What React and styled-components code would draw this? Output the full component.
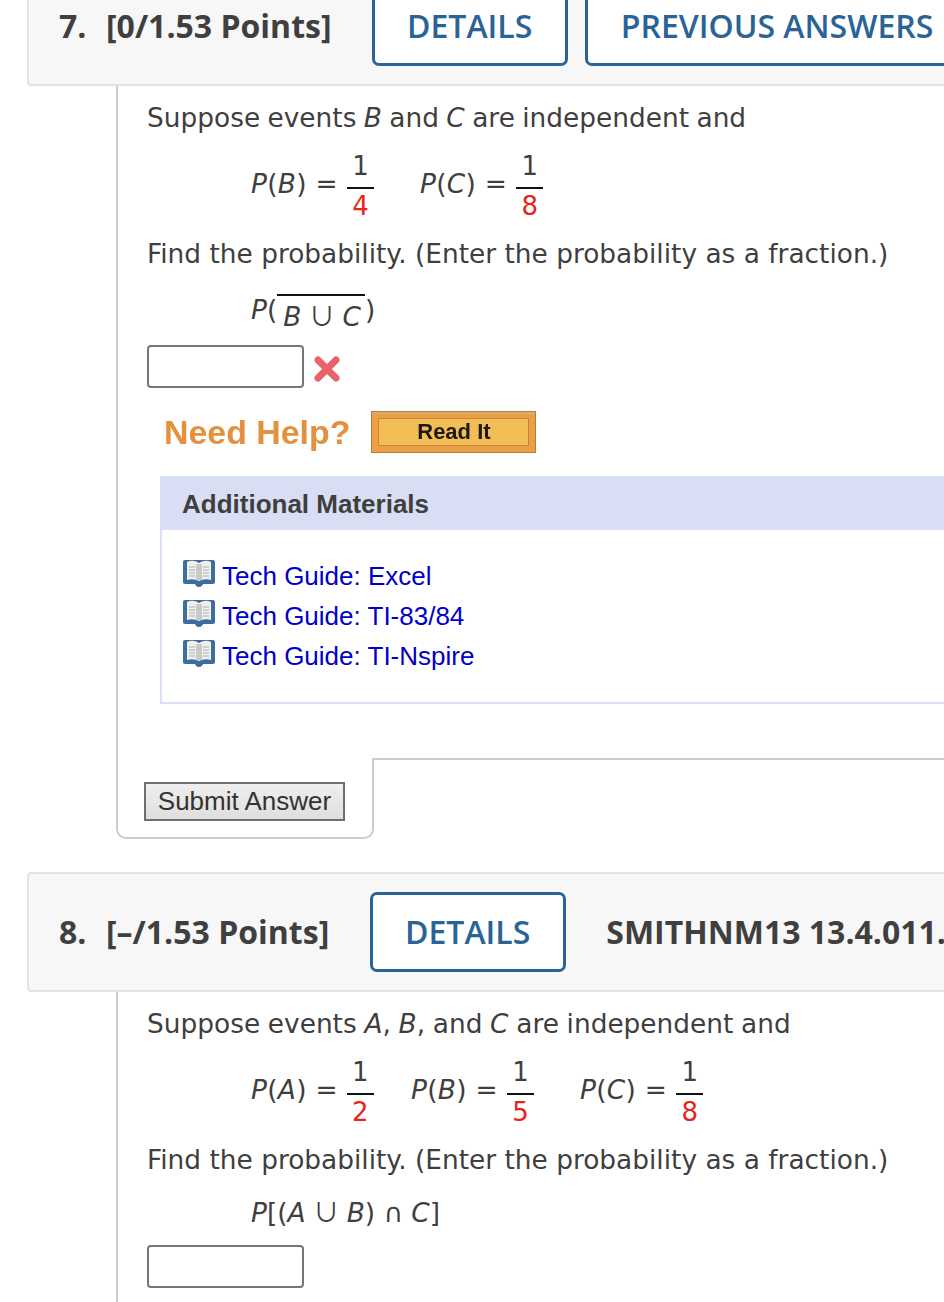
import styled, { createGlobalStyle } from 'styled-components';

const GlobalStyle = createGlobalStyle`
  html, body {
    margin: 0;
    padding: 0;
    background: #fff;
    overflow: hidden;
  }
`;

const Viewport = styled.div`
  width: 944px;
  height: 1302px;
  overflow: hidden;
`;

const Page = styled.div`
  width: 1100px;
  margin-top: -34px;
  padding-left: 27px;
  display: flex;
  flex-direction: column;
  gap: 33px;
  color: #3f3f3f;
  font-family: "DejaVu Sans", Verdana, sans-serif;
`;

const Header = styled.div`
  height: 120px;
  box-sizing: border-box;
  background: #f7f7f7;
  border: 2px solid #e3e3e3;
  border-radius: 4px;
  display: flex;
  align-items: center;
  padding-left: 30px;
  white-space: nowrap;
  font-family: "Open Sans", sans-serif;
`;

const Num = styled.span`
  width: 47px;
  margin-bottom: 2px;
  font-size: 32px;
  font-weight: 700;
`;

const Points = styled.span`
  width: ${p => p.$width}px;
  margin-bottom: 2px;
  font-size: 32px;
  font-weight: 700;
`;

const TabButton = styled.button`
  height: 80px;
  box-sizing: border-box;
  margin-right: ${p => p.$gap || 0}px;
  padding: 0 32.5px 2px;
  background: #fff;
  border: 3px solid #2a6496;
  border-radius: 7px;
  color: #2a6496;
  font: 600 32px "Open Sans", sans-serif;
`;

const Code = styled.span`
  margin-bottom: 2px;
  font-size: 32px;
  font-weight: 700;
`;

const Body = styled.div`
  margin-left: 89px;
  border-left: 2px solid #ccc;
  padding: 12px 0 ${p => p.$bottom}px 29px;
`;

const Para = styled.div`
  font-size: 26.4px;
  line-height: 40px;
  height: 40px;
  word-spacing: ${p => p.$tight || 0}px;
`;

const Var = styled.i`
  font-style: italic;
`;

const MathRow = styled.div`
  height: 70px;
  margin: 10px 0 16px 104px;
  display: flex;
  align-items: center;
  font-size: 26.4px;
  white-space: nowrap;
`;

const MathItem = styled.span`
  display: flex;
  align-items: center;
  width: ${p => p.$width}px;
  letter-spacing: 0.3px;
`;

const Frac = styled.span`
  display: inline-flex;
  flex-direction: column;
  align-items: center;
  width: 27px;
  margin: 2px 0 0 9px;
  font-size: 26px;
  line-height: 30px;
  letter-spacing: 0;
`;

const FracTop = styled.span`
  width: 100%;
  text-align: center;
  border-bottom: 2px solid #111;
  height: 36px;
`;

const FracBottom = styled.span`
  color: #e8251c;
  height: 28px;
  line-height: 34px;
`;

const Expr = styled.div`
  font-size: 26.4px;
  line-height: 40px;
  height: 40px;
  margin: ${p => p.$mt}px 0 0 104px;
  white-space: nowrap;
`;

const Over = styled.span`
  display: inline-block;
  border-top: 2px solid #111;
  line-height: 32px;
  padding: 5px 4px 0 6px;
  transform: translateY(7px);
`;

const Union = styled.span`
  font-family: "Noto Sans CJK JP", sans-serif;
  margin: 0 -1px;
  line-height: 0;
`;

const AnswerRow = styled.div`
  display: flex;
  align-items: center;
  margin-top: ${p => p.$mt}px;
  gap: 9px;
`;

const Field = styled.input`
  width: 157px;
  height: 43px;
  box-sizing: border-box;
  border: 2px solid #767676;
  border-radius: 4px;
  background: #fff;
  margin: 0;
`;

const Cross = styled.svg`
  margin-top: 5px;
  filter: blur(0.5px);
`;

const HelpRow = styled.div`
  display: flex;
  align-items: center;
  margin: 23px 0 0 17px;
  gap: 21px;
  filter: blur(0.4px);
`;

const HelpLabel = styled.span`
  font: 700 33.9px "Liberation Sans", Arial, sans-serif;
  color: #e4913f;
`;

const ReadIt = styled.div`
  width: 165px;
  height: 42px;
  box-sizing: border-box;
  padding: 6px;
  background: #ec9f45;
  border: 1px solid #b97c35;
  box-shadow: inset 0 2px 0 #d5ad7a;
  display: flex;
`;

const ReadItInner = styled.span`
  flex: 1;
  display: flex;
  align-items: center;
  justify-content: center;
  background: #f2bc57;
  border: 1px solid #c08a3c;
  font: 700 22px "Liberation Sans", Arial, sans-serif;
  color: #1d1a12;
`;

const Materials = styled.div`
  margin: 23px 0 0 13px;
  border: 2px solid #d8def3;
  border-top: 0;
  height: 228px;
  box-sizing: border-box;
`;

const MaterialsTitle = styled.div`
  height: 54px;
  margin: 0 0 0 -2px;
  padding-left: 22px;
  background: #d8def3;
  font: 700 26px/56px "Liberation Sans", Arial, sans-serif;
  color: #3f3f3f;
`;

const MaterialsList = styled.div`
  padding: 26px 0 0 21px;
  display: flex;
  flex-direction: column;
`;

const MaterialLink = styled.a`
  height: 40px;
  display: flex;
  align-items: center;
  gap: 7px;
  font: 400 26px "Liberation Sans", Arial, sans-serif;
  color: #0000c8;
`;

const Book = styled.svg`
  margin-bottom: 6px;
  filter: blur(0.4px);
`;

const Footer = styled.div`
  display: flex;
  margin-left: 89px;
`;

const SubmitTab = styled.div`
  width: 258px;
  height: 81px;
  box-sizing: border-box;
  border: 2px solid #ccc;
  border-top: 0;
  border-radius: 0 0 10px 10px;
  padding: 24px 0 0 26px;
`;

const FooterRest = styled.div`
  flex: 1;
  margin-left: -2px;
  border-top: 2px solid #ccc;
`;

const SubmitButton = styled.button`
  width: 201px;
  height: 39px;
  box-sizing: border-box;
  padding: 0;
  background: linear-gradient(#efefef, #dedede);
  border: 2px solid #6f6f6f;
  font: 400 26px "Liberation Sans", Arial, sans-serif;
  color: #333;
`;

const BookIcon = () => (
  <Book width="32" height="28" viewBox="0 0 32 28">
    <path d="M0 3 Q0 1 2 1 H30 Q32 1 32 3 V23 Q32 25 30 25 H20 Q19 28 16 28 Q13 28 12 25 H2 Q0 25 0 23 Z" fill="#3c6d9e" />
    <path d="M4 3 Q10 0 16 4 Q22 0 28 3 V21 Q22 19 16 22 Q10 19 4 21 Z" fill="#eff0ec" />
    <path d="M13 5 H19 V21 H13 Z" fill="#c8cac8" />
    <path d="M6 8 H12 M6 11 H12 M6 14 H12 M6 17 H12 M20 8 H26 M20 11 H26 M20 14 H26 M20 17 H26" stroke="#c2c5c4" strokeWidth="1.5" />
  </Book>
);

const CrossIcon = () => (
  <Cross width="28" height="28" viewBox="0 0 28 28">
    <path d="M5 5 L23 23 M23 5 L5 23" stroke="#e8636a" strokeWidth="7" strokeLinecap="round" />
  </Cross>
);

const materials = ['Tech Guide: Excel', 'Tech Guide: TI-83/84', 'Tech Guide: TI-Nspire'];

const Fraction = ({ bottom }) => (
  <Frac>
    <FracTop>1</FracTop>
    <FracBottom>{bottom}</FracBottom>
  </Frac>
);

const Prob = ({ name, bottom, width }) => (
  <MathItem $width={width}>
    <Var>P</Var>(<Var>{name}</Var>)&nbsp;=
    <Fraction bottom={bottom} />
  </MathItem>
);

export default function App() {
  return (
    <Viewport>
      <GlobalStyle />
      <Page>
        <div>
          <Header>
            <Num>7.</Num>
            <Points $width={265.5}>[0/1.53 Points]</Points>
            <TabButton $gap={17.5}>DETAILS</TabButton>
            <TabButton>PREVIOUS ANSWERS</TabButton>
          </Header>
          <Body $bottom={54}>
            <Para $tight={-1}>
              Suppose events <Var>B</Var> and <Var>C</Var> are independent and
            </Para>
            <MathRow>
              <Prob name="B" bottom="4" width={169} />
              <Prob name="C" bottom="8" width={169} />
            </MathRow>
            <Para>Find the probability. (Enter the probability as a fraction.)</Para>
            <Expr $mt={13}>
              <Var>P</Var>(<Over><Var>B</Var> <Union>∪</Union> <Var>C</Var></Over>)
            </Expr>
            <AnswerRow $mt={18}>
              <Field />
              <CrossIcon />
            </AnswerRow>
            <HelpRow>
              <HelpLabel>Need Help?</HelpLabel>
              <ReadIt><ReadItInner>Read It</ReadItInner></ReadIt>
            </HelpRow>
            <Materials>
              <MaterialsTitle>Additional Materials</MaterialsTitle>
              <MaterialsList>
                {materials.map(m => (
                  <MaterialLink key={m}><BookIcon />{m}</MaterialLink>
                ))}
              </MaterialsList>
            </Materials>
          </Body>
          <Footer>
            <SubmitTab><SubmitButton>Submit Answer</SubmitButton></SubmitTab>
            <FooterRest />
          </Footer>
        </div>
        <div>
          <Header>
            <Num>8.</Num>
            <Points $width={263.5}>[–/1.53 Points]</Points>
            <TabButton $gap={40.5}>DETAILS</TabButton>
            <Code>SMITHNM13 13.4.011.</Code>
          </Header>
          <Body $bottom={60}>
            <Para $tight={-0.7}>
              Suppose events <Var>A</Var>, <Var>B</Var>, and <Var>C</Var> are independent and
            </Para>
            <MathRow>
              <Prob name="A" bottom="2" width={160} />
              <Prob name="B" bottom="5" width={169} />
              <Prob name="C" bottom="8" width={169} />
            </MathRow>
            <Para>Find the probability. (Enter the probability as a fraction.)</Para>
            <Expr $mt={13}>
              <Var>P</Var>[(<Var>A</Var> <Union>∪</Union> <Var>B</Var>) ∩ <Var>C</Var>]
            </Expr>
            <AnswerRow $mt={12}>
              <Field />
            </AnswerRow>
          </Body>
        </div>
      </Page>
    </Viewport>
  );
}
